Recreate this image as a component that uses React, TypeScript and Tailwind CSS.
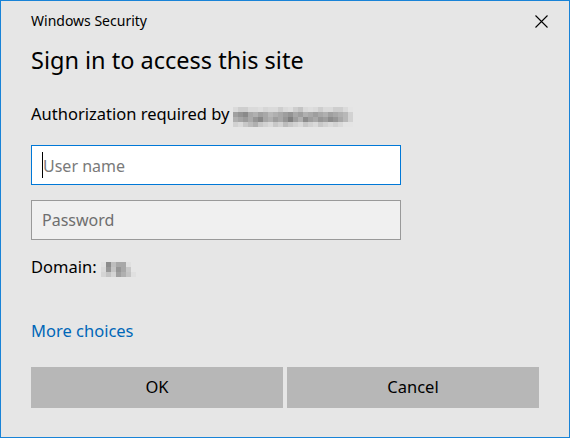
import React from "react";

// pixelated (mosaic) host name, one gray level per 5px cell
const hostCells: number[][] = [
  [218, 206, 206, 218, 218, 222, 214, 218, 218, 206, 218, 222, 206, 196, 218, 222, 218, 206, 218, 218, 206, 206, 218, 228],
  [160, 148, 138, 168, 176, 160, 168, 184, 176, 168, 158, 148, 168, 158, 176, 168, 158, 168, 176, 160, 168, 176, 184, 210],
  [176, 166, 156, 170, 150, 136, 166, 176, 158, 168, 150, 128, 158, 176, 140, 158, 168, 150, 158, 140, 150, 168, 184, 210],
  [210, 218, 200, 188, 176, 200, 210, 218, 200, 210, 188, 200, 210, 218, 200, 210, 218, 200, 210, 218, 210, 218, 228, 228],
];

const domainCells: number[][] = [
  [224, 140, 190, 168, 168, 224, 230],
  [218, 150, 196, 150, 168, 200, 230],
  [212, 196, 212, 160, 176, 196, 224],
];

function Mosaic({ cells }: { cells: number[][] }) {
  return (
    <span className="inline-flex flex-col align-middle">
      {cells.map((row, r) => (
        <span key={r} className="flex">
          {row.map((v, c) => (
            <span
              key={c}
              className="block h-[5px] w-[5px]"
              style={{ backgroundColor: `rgb(${v},${v},${v})` }}
            />
          ))}
        </span>
      ))}
    </span>
  );
}

export default function App() {
  const font = { fontFamily: "'Noto Sans', 'Open Sans', sans-serif" };

  return (
    <div
      className="w-[570px] h-[438px] bg-[#e6e6e6] border border-[#1883d7] text-black flex flex-col"
      style={font}
    >
      {/* Title bar */}
      <div className="flex items-start justify-between pl-[30px] pr-[21px] pt-[10px]">
        <span className="text-[14px] leading-[20px]">Windows Security</span>
        <svg width="13" height="13" viewBox="0 0 13 13" className="mt-[4px]">
          <path d="M0.5 0.5 L12.5 12.5 M12.5 0.5 L0.5 12.5" stroke="#000" strokeWidth="1.1" />
        </svg>
      </div>

      <div className="px-[30px] flex flex-col">
        <h1 className="mt-[13px] text-[23.5px] leading-[32px] font-normal">Sign in to access this site</h1>

        <div className="mt-[26px] flex items-center text-[16.5px] leading-[22px]">
          <span>Authorization required by</span>
          <span className="ml-[3px] mt-[2px]">
            <Mosaic cells={hostCells} />
          </span>
        </div>

        {/* User name field, focused */}
        <div className="mt-[18px] relative w-[370px] h-[40px] bg-white border border-[#0078d7] flex items-center pl-[11px]">
          <span className="absolute left-[10px] top-[6px] w-px h-[26px] bg-black" />
          <span className="mt-[3px] text-[16px] text-[#7a7a7a]">User name</span>
        </div>

        <div className="mt-[15px] w-[370px] h-[40px] bg-[#f0f0f0] border border-[#999999] flex items-center pl-[10px]">
          <span className="mt-[1px] text-[16px] text-[#6e6e6e]">Password</span>
        </div>

        <div className="mt-[16px] flex items-center text-[16.5px] leading-[22px]">
          <span>Domain:</span>
          <span className="ml-[4px] mt-[1px]">
            <Mosaic cells={domainCells} />
          </span>
        </div>

        <a className="mt-[41px] text-[16.5px] leading-[22px] text-[#0067b8] self-start">More choices</a>

        <div className="mt-[25px] flex gap-[4px]">
          <button className="flex-1 h-[41px] bg-[#b7b7b7] text-[16.5px]">OK</button>
          <button className="flex-1 h-[41px] bg-[#b7b7b7] text-[16.5px]">Cancel</button>
        </div>
      </div>
    </div>
  );
}
